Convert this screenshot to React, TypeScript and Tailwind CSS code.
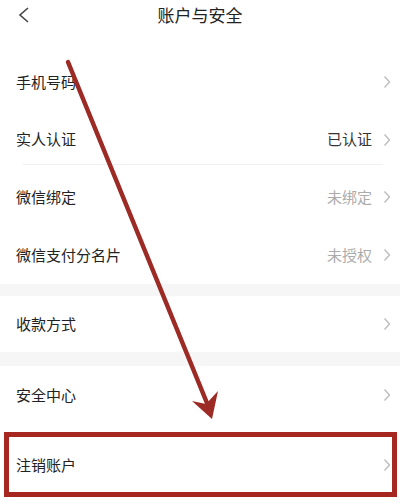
import React from "react";

const rows1 = [
  { label: "手机号码", value: "", h: "h-[58px]" },
  { label: "实人认证", value: "已认证", dark: true, h: "h-[57px]", divider: true },
  { label: "微信绑定", value: "未绑定", h: "h-[58px]" },
  { label: "微信支付分名片", value: "未授权", h: "h-[58px]" },
];

function Chevron() {
  return (
    <svg width="8" height="14" viewBox="0 0 8 14" className="ml-[11px] shrink-0">
      <polyline points="1.5,1.5 6.5,7 1.5,12.5" fill="none" stroke="#bdbdbd" strokeWidth="1.4" />
    </svg>
  );
}

function Row({
  label,
  value,
  dark,
  h,
  divider,
}: {
  label: string;
  value?: string;
  dark?: boolean;
  h: string;
  divider?: boolean;
}) {
  return (
    <div className={`relative flex items-center bg-white pl-4 pr-[9px] ${h}`}>
      <span className="flex-1 text-[15px] text-[#222]">{label}</span>
      {value && (
        <span className={`text-[15px] ${dark ? "text-[#333]" : "text-[#ababab]"}`}>{value}</span>
      )}
      <Chevron />
      {divider && <div className="absolute bottom-[3px] left-[23px] right-[17px] h-px bg-[#f0f0f0]" />}
    </div>
  );
}

export default function App() {
  return (
    <div
      className="relative h-[504px] w-[400px] overflow-hidden bg-white"
      style={{ fontFamily: '"Noto Sans CJK SC", "Noto Sans", sans-serif' }}
    >
      {/* Header */}
      <header className="relative flex h-[30px] items-center justify-center">
        <svg width="12" height="16" viewBox="0 0 12 16" className="absolute left-[18px] top-[7px]">
          <polyline points="10,1 2,8 10,15" fill="none" stroke="#444" strokeWidth="1.6" />
        </svg>
        <h1 className="text-[17px] text-[#222]">账户与安全</h1>
      </header>

      <div className="h-[23px]" />

      {rows1.map((r) => (
        <Row key={r.label} {...r} />
      ))}

      <div className="h-[12px] bg-[#f6f6f6]" />
      <Row label="收款方式" h="h-[56px]" />
      <div className="h-[14px] bg-[#f6f6f6]" />
      <Row label="安全中心" h="h-[58px]" />
      <div className="h-[12px]" />
      <Row label="注销账户" h="h-[58px]" />

      {/* Red highlight box */}
      <div className="absolute left-[4px] top-[432px] h-[65px] w-[393px] border-[5px] border-[#a6271f]" />

      {/* Arrow */}
      <svg className="pointer-events-none absolute left-0 top-0" width="400" height="504" viewBox="0 0 400 504">
        <line x1="68" y1="62" x2="209" y2="408" stroke="#9c2a25" strokeWidth="4.5" strokeLinecap="round" />
        <polygon points="212,419 192,401 206,404 218,391" fill="#9c2a25" />
      </svg>
    </div>
  );
}
